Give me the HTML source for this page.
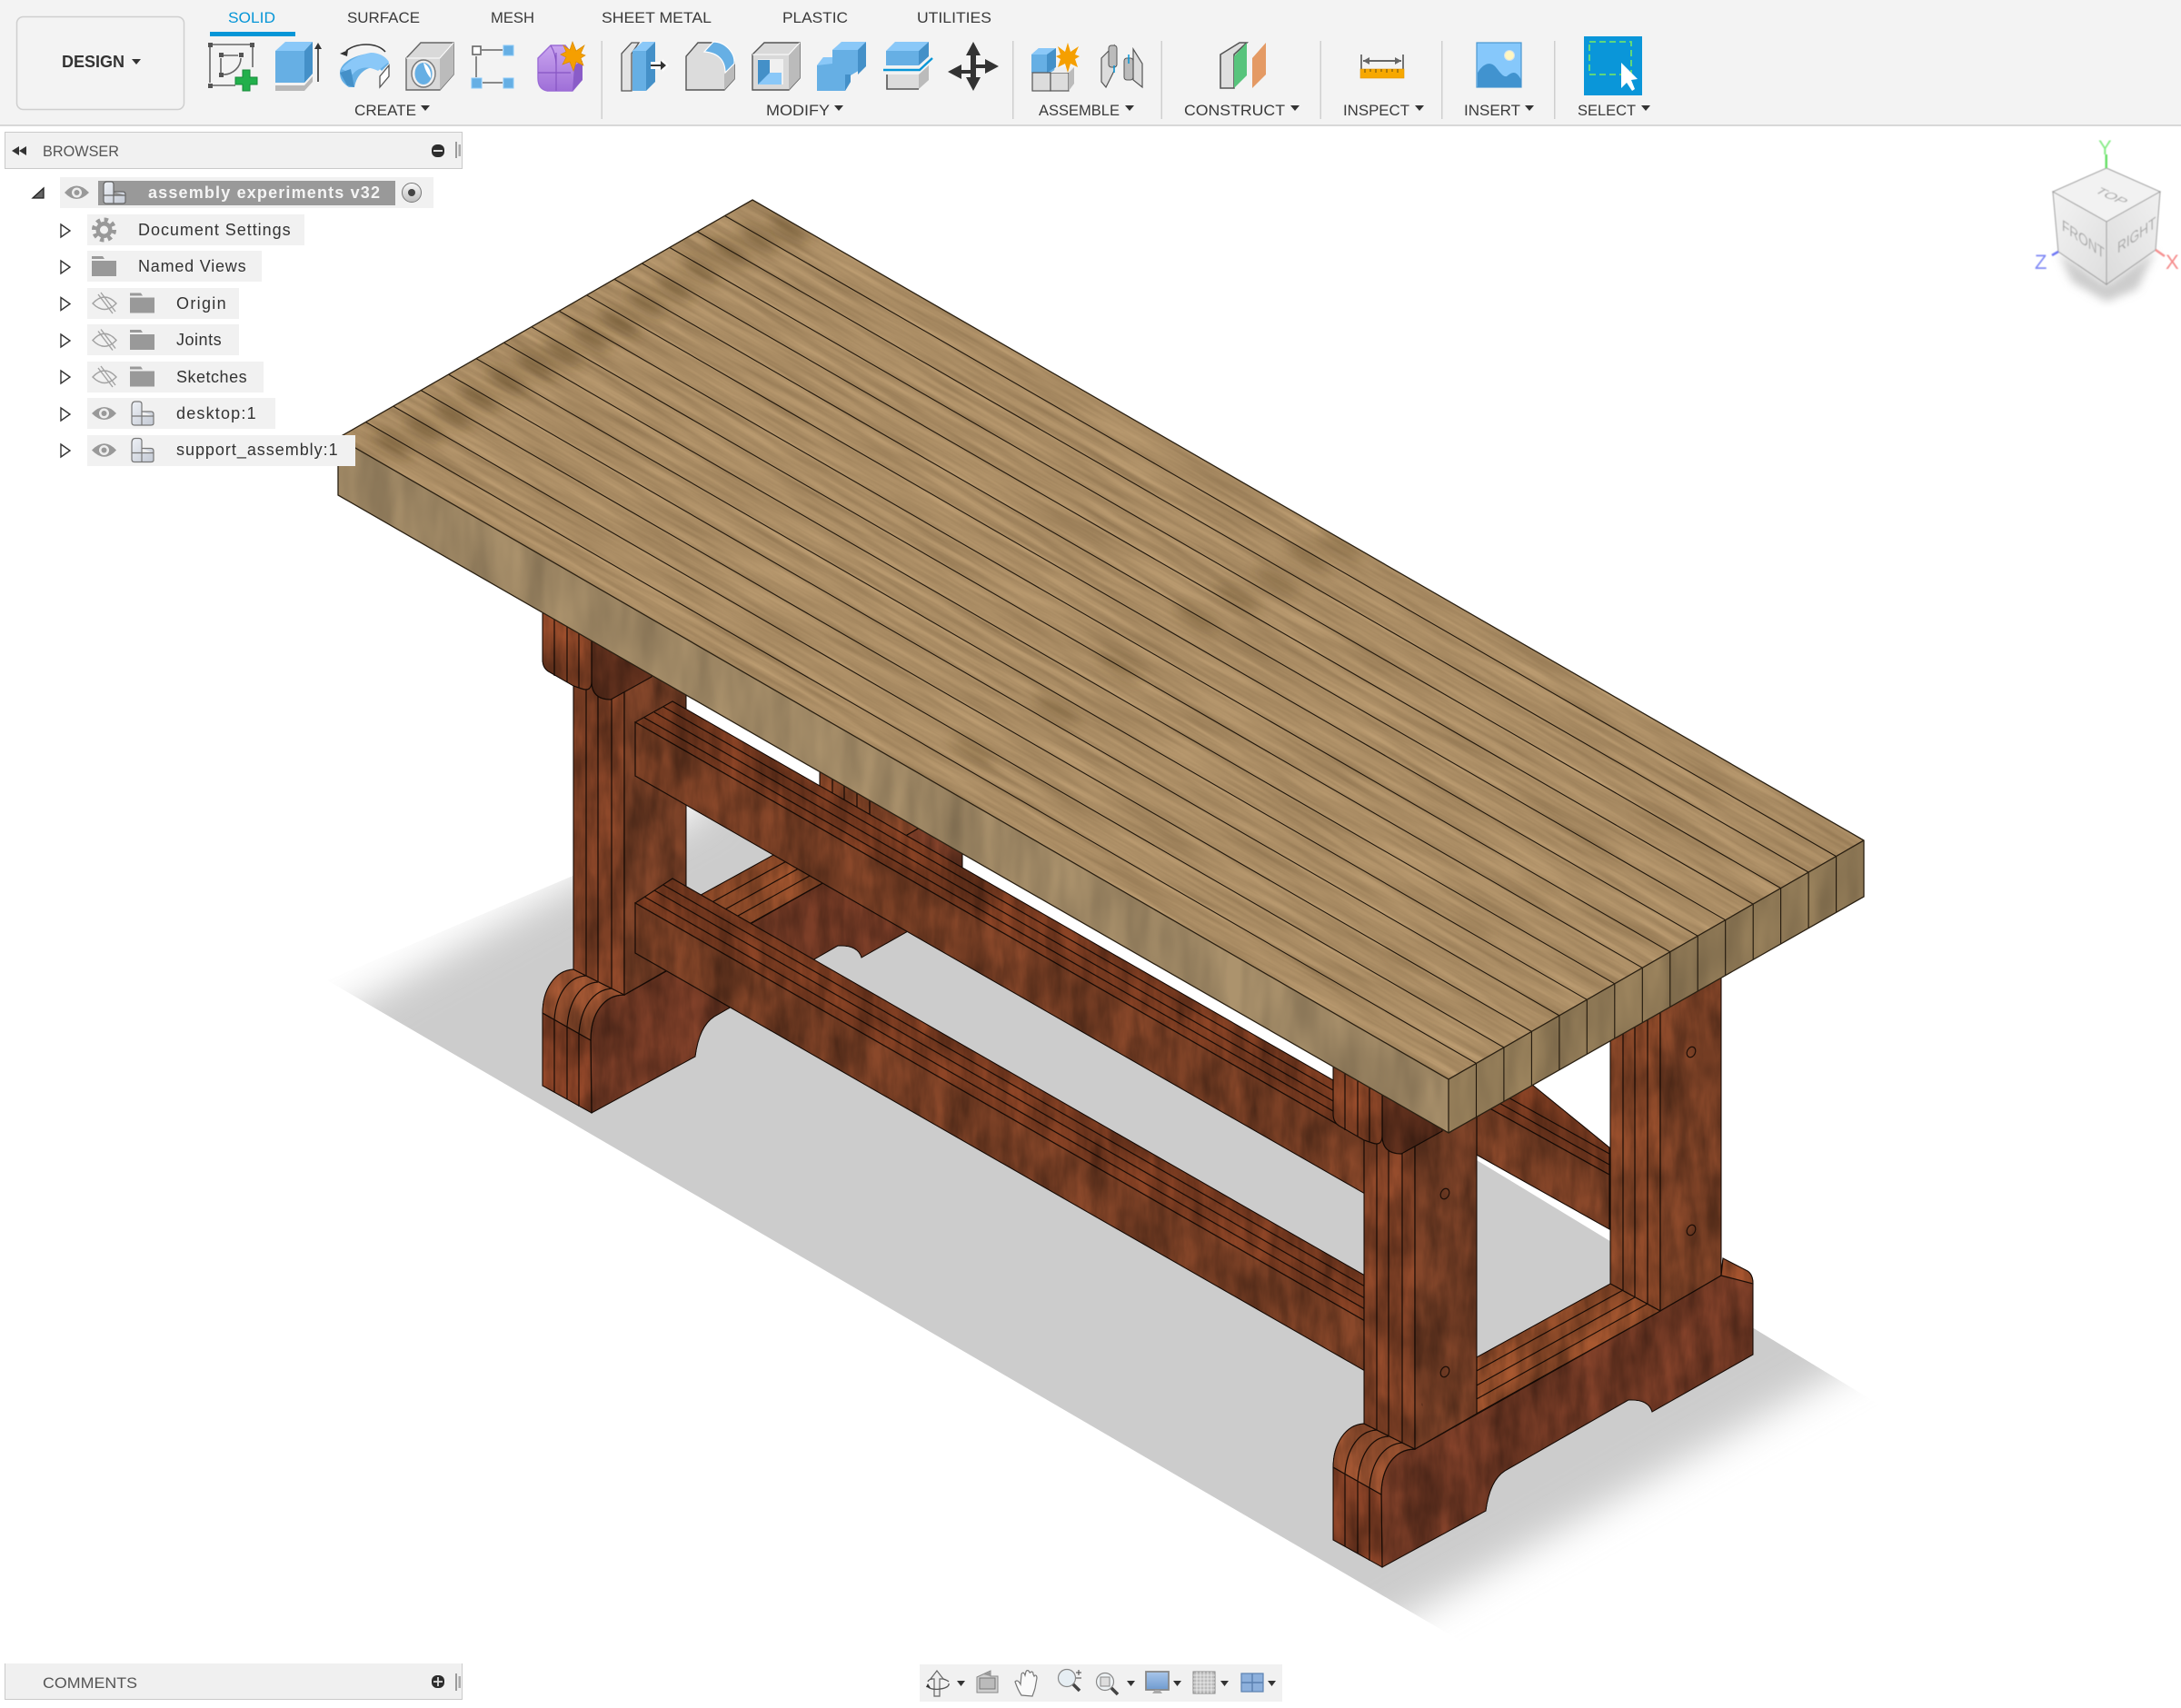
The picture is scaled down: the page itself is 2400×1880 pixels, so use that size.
<!DOCTYPE html>
<html lang="en"><head><meta charset="utf-8"><title>Assembly experiments v32</title>
<style>
html,body{margin:0;padding:0;background:#fff;width:2400px;height:1880px;overflow:hidden}
svg{display:block;font-family:"Liberation Sans",sans-serif}
.tb{font-size:17px;fill:#3a3a3a}
.br{font-size:18px;fill:#333}
.r polygon,.r path.f{stroke:#1d0e07;stroke-width:1.2}
.r line,.r path.l{stroke:#1d0e07;stroke-width:1.2;fill:none}
.a{fill:#333}
</style></head><body>
<svg width="2400" height="1880" viewBox="0 0 2400 1880" xmlns="http://www.w3.org/2000/svg">
<defs>
<filter id="red" filterUnits="userSpaceOnUse" x="500" y="600" width="1500" height="1200" color-interpolation-filters="sRGB">
<feTurbulence type="fractalNoise" baseFrequency="0.07 0.014" numOctaves="4" seed="7" result="n1"/>
<feColorMatrix in="n1" values=".5 0 0 0 .65 .5 0 0 0 .65 .5 0 0 0 .65 0 0 0 0 1" result="g1"/>
<feTurbulence type="fractalNoise" baseFrequency="0.022 0.018" numOctaves="3" seed="21" result="n2"/>
<feColorMatrix in="n2" values=".55 0 0 0 .62 .55 0 0 0 .62 .55 0 0 0 .62 0 0 0 0 1" result="g2"/>
<feComposite in="g1" in2="g2" operator="arithmetic" k1="1" result="g"/>
<feComposite in="g" in2="SourceGraphic" operator="arithmetic" k1="1" result="m"/>
<feComposite in="m" in2="SourceAlpha" operator="in"/>
</filter>
<filter id="side" filterUnits="userSpaceOnUse" x="360" y="470" width="1700" height="790" color-interpolation-filters="sRGB">
<feTurbulence type="fractalNoise" baseFrequency="0.03 0.007" numOctaves="3" seed="11"/>
<feColorMatrix values=".36 0 0 0 .72 .36 0 0 0 .72 .36 0 0 0 .72 0 0 0 0 1" result="g"/>
<feComposite in="g" in2="SourceGraphic" operator="arithmetic" k1="1" result="m"/>
<feComposite in="m" in2="SourceAlpha" operator="in"/>
</filter>
<filter id="top" filterUnits="userSpaceOnUse" x="500" y="-300" width="1800" height="600" color-interpolation-filters="sRGB">
<feTurbulence type="fractalNoise" baseFrequency="0.008 0.14" numOctaves="3" seed="5"/>
<feColorMatrix values=".2 0 0 0 .565 .18 0 0 0 .458 .15 0 0 0 .315 0 0 0 0 1"/>
</filter>
<filter id="b14"><feGaussianBlur stdDeviation="21"/></filter>
<filter id="b5"><feGaussianBlur stdDeviation="5"/></filter>
<filter id="b7" x="-50%" y="-50%" width="200%" height="200%"><feGaussianBlur stdDeviation="7"/></filter>
<filter id="b05"><feGaussianBlur stdDeviation=".6"/></filter>
<clipPath id="shc"><polygon points="360,1079 755,911 755,880 1000,960 1500,1215 1625,1277 2068,1546 1607,1806"/></clipPath>
<clipPath id="tc"><polygon points="828,220 2051,925 1594,1188 372,482"/></clipPath>
<linearGradient id="cl" x1="0" y1="0" x2="1" y2="1"><stop offset="0" stop-color="#f3f3f3"/><stop offset="1" stop-color="#dedede"/></linearGradient>
<linearGradient id="cr" x1="1" y1="0" x2="0" y2="1"><stop offset="0" stop-color="#f0f0f0"/><stop offset="1" stop-color="#dcdcdc"/></linearGradient>
<linearGradient id="comp" x1="0" y1="0" x2="1" y2="1"><stop offset="0" stop-color="#eef1f6"/><stop offset="1" stop-color="#c3c9d4"/></linearGradient>
<linearGradient id="rad" x1="0" y1="0" x2="0" y2="1"><stop offset="0" stop-color="#fafafa"/><stop offset="1" stop-color="#bdbdbd"/></linearGradient>
<linearGradient id="purp" x1="0" y1="0" x2="0" y2="1"><stop offset="0" stop-color="#c9a4ef"/><stop offset="1" stop-color="#9f6fd8"/></linearGradient>
<linearGradient id="scr" x1="0" y1="0" x2="0" y2="1"><stop offset="0" stop-color="#a9c6ea"/><stop offset="1" stop-color="#6f9bd0"/></linearGradient>

<g id="tr" class="r">
<!-- far leg -->
<polygon points="902,560 957,560 957,943 902,913" fill="#a0532f"/>
<polygon points="957,560 1024,560 1024,904 957,943" fill="#8d4a2b"/>
<line x1="916" y1="560" x2="916" y2="920"/><line x1="929" y1="560" x2="929" y2="928"/><line x1="943" y1="560" x2="943" y2="935"/>
<!-- foot side -->
<path class="f" fill="#84422a" d="M650,1145C650,1115 665,1095 687,1095L957,943L1024,904L1026,885L1053,899Q1059,903 1059,913V991L948,1054Q944,1040 922,1041L786,1119C775,1126 768,1140 765,1163L651,1225Z"/>
<path class="f" fill="#a8552f" d="M1024,904L1026,885L1053,899Q1059,903 1059,913Z"/>
<!-- foot end -->
<polygon points="597,1115 650,1145 651,1225 597,1195" fill="#94482a"/>
<path class="f" fill="#ad5c36" d="M597,1115C597,1090 610,1068 631,1067L687,1095C665,1095 650,1115 650,1145Z"/>
<path class="l" d="M610,1122C612,1095 625,1075 645,1074M624,1130C626,1103 638,1082 658,1081M637,1138C639,1110 652,1090 673,1088"/>
<line x1="610" y1="1122" x2="610" y2="1202"/><line x1="624" y1="1130" x2="624" y2="1210"/><line x1="637" y1="1138" x2="637" y2="1218"/>
<!-- foot top between legs -->
<polygon points="753,995 902,913 957,943 753,1057" fill="#a85830"/>
<line x1="753" y1="1010" x2="916" y2="920"/><line x1="753" y1="1026" x2="929" y2="928"/><line x1="753" y1="1041" x2="943" y2="935"/>
<!-- near leg -->
<polygon points="631,680 687,680 687,1095 631,1067" fill="#964c2c"/>
<polygon points="687,680 755,680 755,1056 687,1095" fill="#84462a"/>
<line x1="645" y1="740" x2="645" y2="1074"/><line x1="658" y1="750" x2="658" y2="1081"/><line x1="673" y1="765" x2="673" y2="1088"/>
<!-- bracket -->
<path class="f" fill="#6a3520" d="M651,640L717,680V745L672,770Q651,770 651,750Z"/>
<path class="f" fill="#9c4e2c" d="M597,640H651V750Q651,762 640,758L631,755L605,740Q597,736 597,726Z"/>
<line x1="610" y1="640" x2="610" y2="744"/><line x1="624" y1="640" x2="624" y2="751"/><line x1="637" y1="640" x2="637" y2="757"/>
</g>
</defs>

<rect width="2400" height="1880" fill="#fff"/>

<!-- ground shadow -->
<g clip-path="url(#shc)"><polygon points="232,1228 300,1158 782,888 782,780 1400,980 2146,1380 2128,1452 1493,1810 1461,1925" fill="#cccccc" filter="url(#b14)"/></g>

<!-- red wood frame -->
<g class="r" filter="url(#red)">
<use href="#tr"/>
<!-- upper stretcher -->
<polygon points="699,795 740,772 1502,1209 1502,1255" fill="#8e4526"/>
<polygon points="699,795 1502,1255 1502,1314 699,854" fill="#8a482a"/>
<line x1="709" y1="790" x2="1502" y2="1243"/><line x1="720" y1="784" x2="1502" y2="1232"/><line x1="730" y1="778" x2="1502" y2="1220"/>
<!-- lower stretcher -->
<polygon points="699,994 740,967 1502,1404 1502,1454" fill="#8e4526"/>
<polygon points="699,994 1502,1454 1502,1509 699,1049" fill="#8a482a"/>
<line x1="709" y1="987" x2="1502" y2="1441"/><line x1="720" y1="980" x2="1502" y2="1429"/><line x1="730" y1="974" x2="1502" y2="1416"/>
<!-- back stretcher -->
<polygon points="1623,1180 1669,1180 1771,1263 1771,1293 1623,1211" fill="#8e4526"/>
<polygon points="1623,1211 1771,1293 1771,1353 1623,1270" fill="#8a482a"/>
<line x1="1640" y1="1197" x2="1771" y2="1270"/><line x1="1630" y1="1203" x2="1771" y2="1282"/>
<use href="#tr" transform="translate(870,500)"/>
</g>
<g fill="none" stroke="#1d0e07" stroke-width="1.2">
<ellipse cx="1590" cy="1314" rx="4.5" ry="6" transform="rotate(25 1590 1314)"/>
<ellipse cx="1590" cy="1510" rx="4.5" ry="6" transform="rotate(25 1590 1510)"/>
<ellipse cx="1861" cy="1158" rx="4.5" ry="6" transform="rotate(25 1861 1158)"/>
<ellipse cx="1861" cy="1354" rx="4.5" ry="6" transform="rotate(25 1861 1354)"/>
</g>

<!-- table sides -->
<g filter="url(#side)">
<polygon points="372,482 1594,1188 1594,1247 372,545" fill="#ac936d"/>
<polygon points="1594,1188 2051,925 2051,987 1594,1247" fill="#9b835d"/>
</g>
<!-- table top -->
<g clip-path="url(#tc)">
<rect x="500" y="-300" width="1800" height="600" filter="url(#top)" transform="rotate(30)"/>
<g fill="#4a3418" opacity=".5" filter="url(#b7)">
<ellipse cx="432" cy="490" rx="24" ry="7" transform="rotate(30 432 490)"/><ellipse cx="466" cy="473" rx="24" ry="7" transform="rotate(30 466 473)"/><ellipse cx="497" cy="457" rx="24" ry="7" transform="rotate(30 497 457)"/><ellipse cx="527" cy="438" rx="24" ry="7" transform="rotate(30 527 438)"/><ellipse cx="558" cy="420" rx="24" ry="7" transform="rotate(30 558 420)"/><ellipse cx="589" cy="403" rx="24" ry="7" transform="rotate(30 589 403)"/><ellipse cx="619" cy="388" rx="24" ry="7" transform="rotate(30 619 388)"/><ellipse cx="650" cy="372" rx="24" ry="7" transform="rotate(30 650 372)"/><ellipse cx="681" cy="355" rx="24" ry="7" transform="rotate(30 681 355)"/><ellipse cx="711" cy="335" rx="24" ry="7" transform="rotate(30 711 335)"/><ellipse cx="742" cy="318" rx="24" ry="7" transform="rotate(30 742 318)"/><ellipse cx="770" cy="297" rx="24" ry="7" transform="rotate(30 770 297)"/><ellipse cx="803" cy="278" rx="24" ry="7" transform="rotate(30 803 278)"/><ellipse cx="834" cy="263" rx="24" ry="7" transform="rotate(30 834 263)"/><ellipse cx="868" cy="253" rx="24" ry="7" transform="rotate(30 868 253)"/>
</g>
<g fill="#4a3418" opacity=".35" filter="url(#b7)">
<ellipse cx="1474" cy="600" rx="28" ry="7" transform="rotate(30 1474 600)"/><ellipse cx="1439" cy="615" rx="28" ry="7" transform="rotate(30 1439 615)"/><ellipse cx="1405" cy="640" rx="28" ry="7" transform="rotate(30 1405 640)"/><ellipse cx="1362" cy="658" rx="28" ry="7" transform="rotate(30 1362 658)"/><ellipse cx="1316" cy="681" rx="28" ry="7" transform="rotate(30 1316 681)"/><ellipse cx="1232" cy="735" rx="28" ry="7" transform="rotate(30 1232 735)"/><ellipse cx="1163" cy="781" rx="28" ry="7" transform="rotate(30 1163 781)"/><ellipse cx="1071" cy="827" rx="28" ry="7" transform="rotate(30 1071 827)"/><ellipse cx="980" cy="865" rx="28" ry="7" transform="rotate(30 980 865)"/>
</g>
<g fill="#5a4428" opacity=".16" filter="url(#b7)">
<ellipse cx="1877" cy="867" rx="26" ry="6" transform="rotate(30 1877 867)"/><ellipse cx="1820" cy="900" rx="26" ry="6" transform="rotate(30 1820 900)"/><ellipse cx="1760" cy="935" rx="26" ry="6" transform="rotate(30 1760 935)"/><ellipse cx="1690" cy="975" rx="26" ry="6" transform="rotate(30 1690 975)"/><ellipse cx="1620" cy="1020" rx="26" ry="6" transform="rotate(30 1620 1020)"/><ellipse cx="1549" cy="1060" rx="26" ry="6" transform="rotate(30 1549 1060)"/>
</g>
</g>
<!-- plank lines -->
<g stroke="#20170c" stroke-width="1.1" fill="none">
<path d="M402.4,464.5L1624.5,1170.5M432.8,447.1L1654.9,1152.9M463.2,429.6L1685.4,1135.4M493.6,412.1L1715.9,1117.9M524,394.7L1746.3,1100.3M554.4,377.2L1776.8,1082.8M584.8,359.7L1807.3,1065.3M615.2,342.3L1837.8,1047.8M645.6,324.8L1868.2,1030.2M676,307.3L1898.7,1012.7M706.4,289.9L1929.2,995.2M736.8,272.4L1959.6,977.6M767.2,254.9L1990.1,960.1M797.6,237.5L2020.6,942.6"/>
<path d="M1624.5,1170.5V1229.7M1654.9,1152.9V1212.3M1685.4,1135.4V1195M1715.9,1117.9V1177.7M1746.3,1100.3V1160.3M1776.8,1082.8V1143M1807.3,1065.3V1125.7M1837.8,1047.8V1108.3M1868.2,1030.2V1091M1898.7,1012.7V1073.7M1929.2,995.2V1056.3M1959.6,977.6V1039M1990.1,960.1V1021.7M2020.6,942.6V1004.3"/>
<path stroke="#2a2012" stroke-width="1.3" d="M828,220L2051,925V987L1594,1247L372,545V482ZM372,482L1594,1188L2051,925M1594,1188V1247"/>
</g>

<!-- toolbar -->
<rect width="2400" height="137" fill="#f3f3f3"/>
<rect y="137" width="2400" height="2" fill="#d8d8d8"/>
<rect x="18.5" y="18.5" width="184" height="102" rx="7" fill="#f3f3f3" stroke="#cfcfcf" stroke-width="1.5"/>
<text x="68" y="74" font-size="18" font-weight="bold" fill="#333" textLength="69" lengthAdjust="spacingAndGlyphs">DESIGN</text>
<path class="a" d="M145,65h10l-5,6z"/>
<text x="251" y="25" class="tb" style="fill:#0696d7" textLength="52" lengthAdjust="spacingAndGlyphs">SOLID</text>
<rect x="231" y="35" width="94" height="5" fill="#0696d7"/>
<text x="382" y="25" class="tb" textLength="80" lengthAdjust="spacingAndGlyphs">SURFACE</text>
<text x="540" y="25" class="tb" textLength="48" lengthAdjust="spacingAndGlyphs">MESH</text>
<text x="662" y="25" class="tb" textLength="121" lengthAdjust="spacingAndGlyphs">SHEET METAL</text>
<text x="861" y="25" class="tb" textLength="72" lengthAdjust="spacingAndGlyphs">PLASTIC</text>
<text x="1009" y="25" class="tb" textLength="82" lengthAdjust="spacingAndGlyphs">UTILITIES</text>

<text x="390" y="127" class="tb" textLength="68" lengthAdjust="spacingAndGlyphs">CREATE</text><path class="a" d="M463,116h10l-5,6z"/>
<text x="843" y="127" class="tb" textLength="70" lengthAdjust="spacingAndGlyphs">MODIFY</text><path class="a" d="M918,116h10l-5,6z"/>
<text x="1143" y="127" class="tb" textLength="89" lengthAdjust="spacingAndGlyphs">ASSEMBLE</text><path class="a" d="M1238,116h10l-5,6z"/>
<text x="1303" y="127" class="tb" textLength="111" lengthAdjust="spacingAndGlyphs">CONSTRUCT</text><path class="a" d="M1420,116h10l-5,6z"/>
<text x="1478" y="127" class="tb" textLength="73" lengthAdjust="spacingAndGlyphs">INSPECT</text><path class="a" d="M1557,116h10l-5,6z"/>
<text x="1611" y="127" class="tb" textLength="62" lengthAdjust="spacingAndGlyphs">INSERT</text><path class="a" d="M1678,116h10l-5,6z"/>
<text x="1736" y="127" class="tb" textLength="64" lengthAdjust="spacingAndGlyphs">SELECT</text><path class="a" d="M1806,116h10l-5,6z"/>
<g fill="#cfcfcf"><rect x="661.5" y="45" width="1.5" height="86"/><rect x="1114" y="45" width="1.5" height="86"/><rect x="1277.5" y="45" width="1.5" height="86"/><rect x="1452.5" y="45" width="1.5" height="86"/><rect x="1586" y="45" width="1.5" height="86"/><rect x="1710" y="45" width="1.5" height="86"/></g>

<!-- sketch icon -->
<g stroke="#666" stroke-width="1.6" fill="none"><path d="M234,49H275M231,52V91M234,94H259M278,52V74M243,64V80M246,61H262M265,64C265,74 256,82 246,82"/></g>
<g fill="#555"><rect x="229" y="47" width="5" height="5"/><rect x="275" y="47" width="5" height="5"/><rect x="229" y="92" width="5" height="5"/><rect x="241" y="58" width="5" height="5"/><rect x="263" y="58" width="5" height="5"/><rect x="241" y="80" width="5" height="5"/></g>
<path d="M267,77h8v8h8v8h-8v7h-8v-7h-8v-8h8z" fill="#22b04c" stroke="#178a3a" stroke-width="1"/>
<!-- extrude -->
<polygon points="303,94 335,94 344,84 344,90 335,100 303,100" fill="#b8b8b8"/><polygon points="303,56 335,56 335,91 303,91" fill="#66afe4"/><polygon points="303,56 314,46 344,46 335,56" fill="#8ac8f8"/><polygon points="335,56 344,46 344,81 335,91" fill="#4490c8"/>
<path d="M350,90V52" stroke="#333" stroke-width="1.6"/><path d="M346,54l4,-7 4,7z" fill="#333"/>
<!-- revolve -->
<path d="M374,80C374,72 384,62 405,59C418,58 426,63 428,70L420,78C414,70 394,74 390,96L384,96C378,92 374,88 374,80Z" fill="#66afe4"/>
<path d="M376,76C384,66 396,60 408,58C417,58 424,62 428,68L416,78C404,72 394,74 388,82Z" fill="#8ac8f8"/>
<path d="M374,80L386,76 390,96 382,94Z" fill="#4490c8"/>
<polygon points="418,84 428,72 428,84 418,96" fill="#fff" stroke="#555" stroke-width="1.3"/>
<path d="M424,57C414,46 392,47 381,56" stroke="#333" stroke-width="1.6" fill="none"/><path d="M374,59l9,-4 -1,7z" fill="#333"/>
<!-- hole -->
<polygon points="447,64 463,47 499,47 499,82 484,99 447,99" fill="#d9d9d9" stroke="#666" stroke-width="1.4"/><polygon points="484,64 499,47 499,82 484,99" fill="#bbb"/><path d="M447,64H484L499,47" stroke="#fff" stroke-width="1" fill="none"/>
<ellipse cx="466" cy="81" rx="13" ry="15" fill="#eee" stroke="#777" stroke-width="1.4"/><ellipse cx="466" cy="81" rx="9.5" ry="12" fill="#66afe4"/><path d="M466,69C471,72 475,78 474,86C470,82 467,75 466,69Z" fill="#fff"/>
<!-- pattern -->
<rect x="520" y="51" width="9" height="9" fill="#fff" stroke="#666" stroke-width="1.6"/><rect x="554" y="50" width="11" height="11" fill="#66afe4" stroke="#8ac8f8"/><rect x="519" y="86" width="11" height="11" fill="#66afe4" stroke="#8ac8f8"/><rect x="554" y="86" width="11" height="11" fill="#66afe4" stroke="#8ac8f8"/><path d="M530,55H553M524,62V85M531,91H553" stroke="#666" stroke-width="1.5"/>
<!-- form -->
<path d="M592,64L606,50H622L640,72V88L630,100H602Q592,98 592,86Z" fill="url(#purp)" stroke="#9b6cd6" stroke-width="1.4"/><path d="M592,80H628M612,58V100M606,50Q612,60 612,72" stroke="#8755c4" stroke-width="1.2" fill="none"/><polygon points="632,72 641,67 641,88 630,100" fill="#8a5cc8"/>
<polygon points="630,46 634,56 643,50 639,59 644,61 639,64 642,72 634,68 631,78 627,68 619,71 623,63 617,60 623,57 620,50 627,55" fill="#f59f00" stroke="#d98a00" stroke-width=".7"/>

<!-- press pull -->
<path d="M684,100V59L695,47H703L695,59V100Z" fill="#e3e3e3" stroke="#555" stroke-width="1.3"/><polygon points="696,56 711,56 711,100 696,100" fill="#66afe4"/><polygon points="696,56 707,46 721,46 711,56" fill="#8ac8f8"/><polygon points="711,56 721,46 721,90 711,100" fill="#4490c8"/>
<path d="M716,68h13v-3l7,7 -7,7v-3h-13z" fill="#fff"/><path d="M716,72h13" stroke="#333" stroke-width="2"/><path d="M727,67l6,5 -6,5z" fill="#333"/>
<!-- fillet -->
<path d="M755,99V62L768,47H790L808,68V87L797,99Z" fill="#dcdcdc" stroke="#555" stroke-width="1.4"/><polygon points="797,80 808,70 808,87 797,99" fill="#bbb"/><path d="M775,57C790,58 798,66 798,80L808,70C809,58 798,46 785,46Z" fill="#66afe4" stroke="#fff" stroke-width="1.2"/>
<!-- shell -->
<polygon points="828,60 841,47 880,47 880,86 868,99 828,99" fill="#d9d9d9" stroke="#555" stroke-width="1.4"/><polygon points="868,60 880,47 880,86 868,99" fill="#bbb"/><path d="M828,60H868L880,47" stroke="#fff" stroke-width="1" fill="none"/><rect x="834" y="65" width="28" height="28" fill="#f0f0f0"/><polygon points="834,66 847,66 847,80 860,80 860,93 834,93" fill="#8ac8f8"/><polygon points="834,66 847,66 847,80 834,93" fill="#4490c8"/>
<!-- combine -->
<polygon points="899,100 899,72 906,63 916,63 916,55 926,47 953,47 953,73 936,83 936,90 930,100" fill="#66afe4"/><polygon points="916,55 926,46 953,46 944,55" fill="#8ac8f8"/><polygon points="944,55 953,46 953,73 944,82" fill="#4490c8"/><polygon points="899,72 906,63 916,63 916,70" fill="#8ac8f8"/><polygon points="930,82 936,82 936,90 930,100" fill="#4490c8"/>
<!-- split -->
<polygon points="975,56 1011,56 1011,72 975,72" fill="#66afe4"/><polygon points="975,56 985,46 1022,46 1011,56" fill="#8ac8f8"/><polygon points="1011,56 1022,46 1022,62 1011,72" fill="#4490c8"/>
<path d="M972,77H1012L1026,64" stroke="#0696d7" stroke-width="2.4" fill="none"/>
<polygon points="976,82 1011,82 1022,72 1022,88 1011,98 976,98" fill="#dcdcdc"/><polygon points="1011,82 1022,72 1022,88 1011,98" fill="#bbb"/><path d="M976,82V98H1011" stroke="#555" stroke-width="1.6" fill="none"/>
<!-- move -->
<path d="M1071,46l8,15h-5v10h10v-6l15,8 -15,8v-6h-10v10h5l-8,15 -8,-15h5V81h-10v6l-15,-8 15,-8v6h10V61h-5z" fill="#333"/>

<!-- new component -->
<polygon points="1135,60 1143,53 1162,53 1162,57 1160,80 1135,80" fill="#66afe4"/><polygon points="1135,60 1143,53 1162,53 1152,60" fill="#8ac8f8"/><polygon points="1152,60 1162,53 1162,74 1152,80" fill="#4490c8"/>
<rect x="1136" y="80" width="20" height="20" fill="#dcdcdc" stroke="#555" stroke-width="1.2"/><rect x="1156" y="80" width="20" height="20" fill="#dcdcdc" stroke="#555" stroke-width="1.2"/><polygon points="1156,80 1165,74 1182,74 1176,80" fill="#eee"/><polygon points="1176,80 1182,74 1182,92 1176,100" fill="#bbb"/>
<polygon points="1175,47 1178,57 1187,51 1183,60 1188,62 1183,65 1186,74 1178,70 1175,80 1172,70 1164,74 1167,65 1162,62 1167,60 1164,51 1172,57" fill="#f59f00"/>
<!-- joint -->
<path d="M1212,64L1226,50V78L1217,96L1212,90Z" fill="#dcdcdc" stroke="#555" stroke-width="1.2"/><rect x="1220" y="50" width="9" height="24" rx="3" fill="#bbb" stroke="#555" stroke-width="1"/>
<rect x="1237" y="64" width="10" height="24" rx="3" fill="#bbb" stroke="#555" stroke-width="1"/><path d="M1247,54L1257,70V96L1247,88Z" fill="#dcdcdc" stroke="#555" stroke-width="1.2"/><path d="M1226,72V80M1242,60V70" stroke="#0696d7" stroke-width="1.5"/>

<!-- construct -->
<path d="M1343,60L1364,47H1372L1358,60V97H1343Z" fill="#dedede" stroke="#555" stroke-width="1.6"/><polygon points="1358,62 1372,47 1372,83 1358,97" fill="#58c47c"/><polygon points="1378,64 1393,47 1393,82 1378,97" fill="#e49a64"/>
<!-- inspect -->
<path d="M1498,60V76M1544,60V76" stroke="#555" stroke-width="1.6"/><path d="M1500,67H1542" stroke="#666" stroke-width="2"/><path d="M1500,67l7,-4v8zM1542,67l-7,-4v8z" fill="#666"/>
<rect x="1497" y="76" width="48" height="10" fill="#f7a800" stroke="#e09500" stroke-width=".6"/><path d="M1502,76v4M1508,76v3M1514,76v4M1520,76v3M1526,76v4M1532,76v3M1538,76v4" stroke="#7a5a10" stroke-width="1.2"/>
<!-- insert -->
<rect x="1625" y="47" width="49" height="49" fill="#86c8fb" stroke="#4a97d0" stroke-width="1.2"/><circle cx="1661" cy="61" r="5.5" fill="#fff7c2" stroke="#cfe0ee"/><path d="M1626,80C1632,70 1640,67 1646,74C1651,80 1654,85 1658,84C1663,80 1668,76 1674,88V96H1626Z" fill="#4193cf"/>
<!-- select -->
<rect x="1743" y="40" width="64" height="65" fill="#0a96d9"/><rect x="1749" y="46" width="46" height="36" fill="none" stroke="#6adf72" stroke-width="1.8" stroke-dasharray="7 4"/><path d="M1784,69V97L1790,91 1796,100 1799,98 1795,88 1802,87Z" fill="#fff"/>

<!-- browser panel -->
<rect x="5.5" y="145.5" width="503" height="40" fill="#f1f1f1" stroke="#cacaca"/>
<path d="M13,166l8,-5v10zM21,166l8,-5v10z" fill="#333"/>
<text x="47" y="172" font-size="17" fill="#555" textLength="84" lengthAdjust="spacingAndGlyphs">BROWSER</text>
<rect x="475" y="159" width="14" height="14" rx="6" fill="#2d2d2d"/><rect x="477" y="165" width="10" height="2" fill="#ddd"/>
<path d="M502,156V174" stroke="#777" stroke-width="1.4"/><rect x="504.5" y="159" width="2.5" height="13" fill="#aaa"/>

<rect x="66" y="195" width="411" height="34" fill="#f1f1f1"/>
<rect x="108" y="199" width="327" height="27" fill="#999"/>
<path d="M36,218L48,207V218Z" fill="#666" stroke="#222" stroke-width="1.3"/>
<path d="M71,212Q84,197 98,212Q84,226 71,212Z" fill="#999"/><circle cx="84.5" cy="212" r="5.5" fill="#eee"/><circle cx="84.5" cy="212" r="3" fill="#999"/>
<text x="163" y="218" font-size="18" font-weight="bold" fill="#f4f4f4" textLength="255" lengthAdjust="spacing">assembly experiments v32</text>
<circle cx="453" cy="212" r="10.5" fill="url(#rad)" stroke="#777"/><circle cx="453" cy="212" r="4" fill="#444"/>

<g fill="#f1f1f1">
<rect x="96" y="236" width="239" height="34"/><rect x="96" y="276" width="192" height="34"/><rect x="96" y="317" width="167" height="34"/><rect x="96" y="357" width="167" height="34"/><rect x="96" y="398" width="194" height="34"/><rect x="96" y="438" width="207" height="34"/><rect x="96" y="479" width="295" height="34"/>
</g>
<g fill="#fff" stroke="#333" stroke-width="1.4">
<path d="M67,247l10,7 -10,7z"/><path d="M67,287l10,7 -10,7z"/><path d="M67,327.5l10,7 -10,7z"/><path d="M67,368l10,7 -10,7z"/><path d="M67,408l10,7 -10,7z"/><path d="M67,449l10,7 -10,7z"/><path d="M67,489l10,7 -10,7z"/>
</g>
<!-- gear -->
<circle cx="114.5" cy="253" r="9" fill="#999"/><circle cx="114.5" cy="253" r="11" fill="none" stroke="#999" stroke-width="5" stroke-dasharray="4.3 4.3"/><circle cx="114.5" cy="253" r="4.5" fill="#f1f1f1"/>
<!-- folders -->
<g fill="#999">
<path d="M101,282h12l2,3h-14zM101,287h27v17h-27z"/>
<path d="M143,322.5h12l2,3h-14zM143,327.5h27v17h-27z"/>
<path d="M143,363h12l2,3h-14zM143,368h27v17h-27z"/>
<path d="M143,403.5h12l2,3h-14zM143,408.5h27v17h-27z"/>
</g>
<!-- hidden eyes -->
<g fill="none" stroke="#a2a2a2" stroke-width="1.4">
<path d="M102,334Q115,320 128,334Q115,347 102,334ZM108,324L124,345M111,322L127,343"/>
<path d="M102,374.5Q115,360 128,374.5Q115,388 102,374.5ZM108,364.500L124,385.500M111,362.500L127,383.500"/>
<path d="M102,415Q115,401 128,415Q115,428 102,415ZM108,405L124,426M111,403L127,424"/>
</g>
<!-- eyes -->
<path d="M101,455Q115,441 128,455Q115,469 101,455Z" fill="#999"/><circle cx="114.5" cy="455" r="5.5" fill="#eee"/><circle cx="114.5" cy="455" r="3" fill="#999"/>
<path d="M101,495.5Q115,481 128,495.5Q115,510 101,495.5Z" fill="#999"/><circle cx="114.5" cy="495.5" r="5.5" fill="#eee"/><circle cx="114.5" cy="495.5" r="3" fill="#999"/>
<!-- component icons -->
<path d="M145,447Q145,442 149,442H153Q156,442 156,445V453H166Q169,453 169,456V466Q169,468 166,468H148Q145,468 145,465Z M145,458H156V468M156,453V458H169" fill="url(#comp)" stroke="#777" stroke-width="1.2"/>
<path d="M145,487.5Q145,482.5 149,482.5H153Q156,482.5 156,485.5V493.5H166Q169,493.5 169,496.5V506.5Q169,508.5 166,508.5H148Q145,508.5 145,505.5Z M145,498.5H156V508.5M156,493.5V498.5H169" fill="url(#comp)" stroke="#777" stroke-width="1.2"/>
<path d="M114,204Q114,200 118,200H122Q125,200 125,203V211H135Q138,211 138,214V222Q138,224 135,224H117Q114,224 114,221Z M114,215H125V224M125,211V215H138" fill="url(#comp)" stroke="#666" stroke-width="1.2"/>

<g class="br" letter-spacing=".4">
<text x="152" y="259" textLength="168">Document Settings</text>
<text x="152" y="299" textLength="119">Named Views</text>
<text x="194" y="340" textLength="55">Origin</text>
<text x="194" y="380" textLength="50">Joints</text>
<text x="194" y="421" textLength="78">Sketches</text>
<text x="194" y="461" textLength="88">desktop:1</text>
<text x="194" y="501" textLength="178">support_assembly:1</text>
</g>

<!-- view cube -->
<g filter="url(#b05)">
<path d="M2265,277L2318,313L2372,275L2352,318L2318,332L2280,310Z" fill="#999" opacity=".5" filter="url(#b5)"/>
<polygon points="2318,185 2377,211 2318,244 2259,211" fill="#f2f2f2" stroke="#999"/>
<polygon points="2259,211 2318,244 2318,313 2265,277" fill="url(#cl)" stroke="#999"/>
<polygon points="2318,244 2377,211 2372,275 2318,313" fill="url(#cr)" stroke="#999"/>
<g font-size="17" fill="#a8a8a8">
<text transform="matrix(.9,.42,-.7,.42,2304,211)">TOP</text>
<text transform="matrix(.8,.55,0,1,2269,253)">FRONT</text>
<text transform="matrix(.8,-.55,0,1,2330,279)">RIGHT</text>
</g>
<rect x="2316.5" y="170" width="2.5" height="15" fill="#66e066"/>
<text x="2309" y="170" font-size="22" fill="#86ec86">Y</text>
<path d="M2265,277L2258,281" stroke="#6f78f5" stroke-width="2.5"/>
<text x="2239" y="296" font-size="22" fill="#7f88f5">Z</text>
<path d="M2372,275L2382,282" stroke="#f59090" stroke-width="2.5"/>
<text x="2383" y="296" font-size="22" fill="#f58a8a">X</text>
</g>

<!-- comments -->
<path d="M5.5,1831V1870.5H508.5V1831" fill="#f0f0f0" stroke="#cacaca"/>
<text x="47" y="1858" font-size="17" fill="#555" textLength="104" lengthAdjust="spacingAndGlyphs">COMMENTS</text>
<rect x="475" y="1844" width="14" height="14" rx="6" fill="#2d2d2d"/><path d="M477,1851h10M482,1846v10" stroke="#ddd" stroke-width="1.8"/>
<path d="M502,1842V1861" stroke="#777" stroke-width="1.4"/><rect x="504.5" y="1845" width="2.5" height="13" fill="#aaa"/>

<!-- nav bar -->
<rect x="1012" y="1832" width="399" height="41" fill="#f1f1f1"/>
<path d="M1031,1839l7,9h-4v19h-6v-19h-4z" fill="#eee" stroke="#666" stroke-width="1.2"/><path d="M1044,1853C1046,1860 1020,1862 1021,1855M1021,1851C1022,1849 1024,1848 1026,1848M1038,1848C1041,1849 1043,1850 1044,1851" fill="none" stroke="#555" stroke-width="1.3"/><path d="M1024,1858l-3,-5 -2,4z" fill="#333"/>
<path d="M1053,1850h9l-4.500,6z" fill="#333"/>
<path d="M1075,1846L1090,1839V1845H1098V1863H1075Z" fill="#cfcfcf" stroke="#888" stroke-width="1"/><rect x="1078" y="1847" width="17" height="12" fill="#bbb" stroke="#777"/><path d="M1082,1843l8,-3v5z" fill="#999"/>
<path d="M1124,1866C1120,1860 1118,1854 1117,1851C1119,1849 1121,1850 1123,1854L1124,1843C1125,1840 1127,1841 1128,1844L1129,1840C1130,1838 1132,1838 1133,1841L1134,1841C1135,1839 1137,1840 1137,1843L1138,1845C1139,1843 1141,1844 1141,1847L1139,1858C1138,1862 1137,1864 1136,1867Z" fill="#fafafa" stroke="#777" stroke-width="1.2"/>
<circle cx="1174" cy="1847" r="9.500" fill="#e6eef3" stroke="#888" stroke-width="1.2"/><path d="M1181,1854l7,7" stroke="#444" stroke-width="3.500"/><path d="M1184,1841h6M1187,1838v6M1184,1847h6" stroke="#444" stroke-width="1"/>
<circle cx="1216" cy="1851" r="9.500" fill="#eef2f4" stroke="#888" stroke-width="1.200"/><rect x="1211" y="1846" width="10" height="10" fill="#ddd" stroke="#888"/><path d="M1223,1858l7,7" stroke="#444" stroke-width="3.500"/>
<path d="M1240,1850h9l-4.500,6z" fill="#333"/>
<rect x="1261" y="1840" width="25" height="20" fill="url(#scr)" stroke="#888" stroke-width="1.800"/><path d="M1268,1864h11l-3,-4h-5z" fill="#aaa"/>
<path d="M1291,1850h9l-4.500,6z" fill="#333"/>
<rect x="1313" y="1840" width="24" height="24" fill="#bbb" stroke="#888"/><path d="M1313,1844h24M1313,1848h24M1313,1852h24M1313,1856h24M1313,1860h24M1317,1840v24M1321,1840v24M1325,1840v24M1329,1840v24M1333,1840v24" stroke="#f2f2f2" stroke-width=".8"/>
<path d="M1343,1850h9l-4.500,6z" fill="#333"/>
<rect x="1366" y="1842" width="24" height="20" fill="#8db0dc" stroke="#5a80b0" stroke-width="1.200"/><path d="M1378,1842v20M1366,1852h24" stroke="#5a80b0" stroke-width="1.400"/>
<path d="M1395,1850h9l-4.500,6z" fill="#333"/>
</svg>
</body></html>
